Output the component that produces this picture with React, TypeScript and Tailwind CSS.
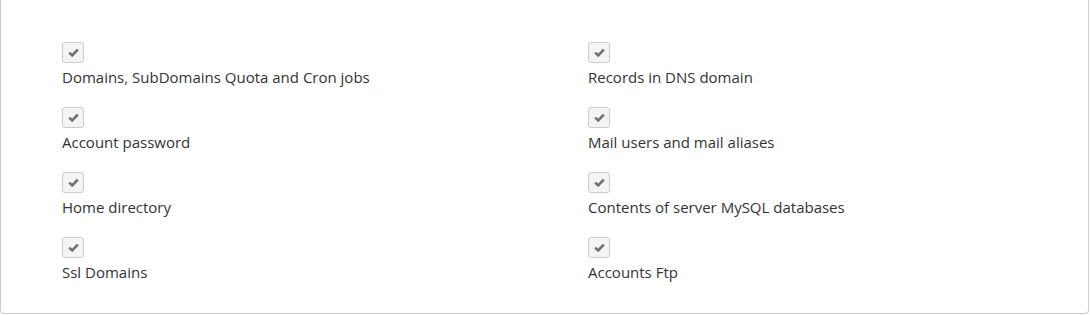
const items: string[][] = [
  ["Domains, SubDomains Quota and Cron jobs", "Records in DNS domain"],
  ["Account password", "Mail users and mail aliases"],
  ["Home directory", "Contents of server MySQL databases"],
  ["Ssl Domains", "Accounts Ftp"],
];

function CheckItem({ label }: { label: string }) {
  return (
    <div className="flex flex-col items-start">
      <span className="flex h-[21px] w-[22px] items-center justify-center rounded-[3px] border border-[#cccccc] bg-[#f4f4f4]">
        <svg width="11" height="9" viewBox="0 0 11 9">
          <path d="M1.2 4.6 L4.2 7.4 L9.8 1.6" fill="none" stroke="#707070" strokeWidth="2.6" />
        </svg>
      </span>
      <span className="mt-[4px] text-[15px] leading-[21px] text-[#333333]">{label}</span>
    </div>
  );
}

export default function App() {
  return (
    <div className="h-[315px] w-[1090px] bg-white" style={{ fontFamily: '"Open Sans", sans-serif' }}>
      <div className="h-[314px] w-[1089px] rounded-b-[4px] border border-t-0 border-[#cccccc] pl-[61px] pt-[42px]">
        <div className="grid grid-cols-[526px_1fr] gap-y-[19px]">
          {items.map((row) => row.map((label) => <CheckItem key={label} label={label} />))}
        </div>
      </div>
    </div>
  );
}
